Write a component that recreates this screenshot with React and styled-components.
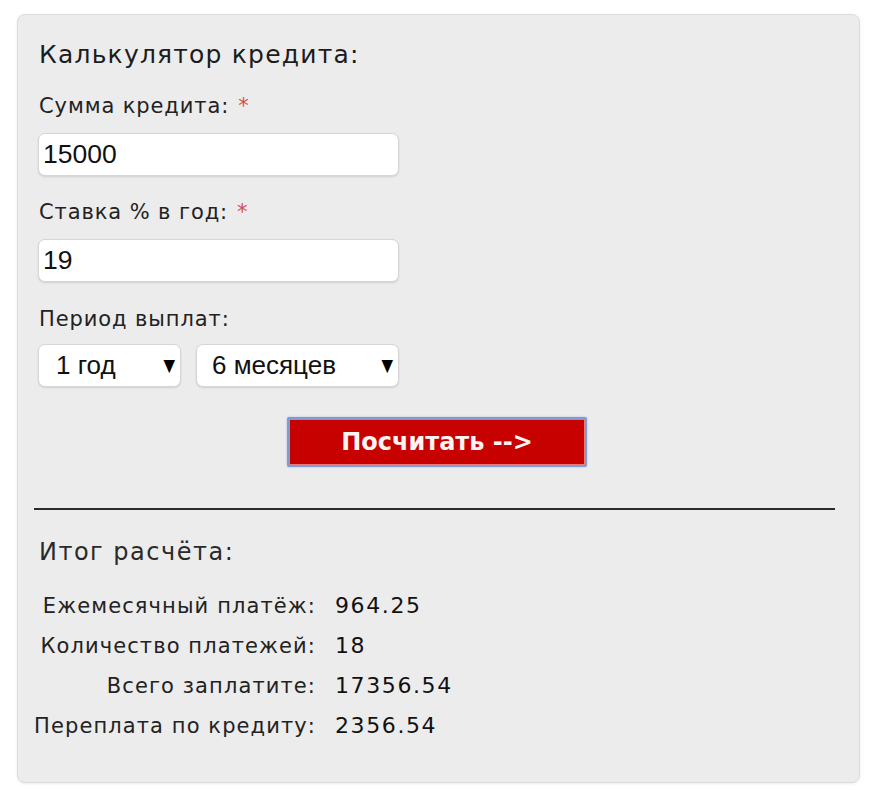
import React from "react";
import styled, { createGlobalStyle } from "styled-components";

const Global = createGlobalStyle`
  html, body { margin: 0; padding: 0; background: #ffffff; }
  body { font-family: "DejaVu Sans", Verdana, sans-serif; color: #1a1a1a; }
`;

const Page = styled.div`
  padding: 14px 16px 16px 17px;
`;

const Panel = styled.div`
  width: 843px;
  box-sizing: border-box;
  background: #ececec;
  border: 1px solid #dcdcdc;
  border-radius: 8px;
  box-shadow: 0 1px 3px rgba(0, 0, 0, 0.08);
  padding: 25px 24px 36px 21px;
`;

const Title = styled.div`
  font-size: 25px;
  line-height: 30px;
  letter-spacing: 1.2px;
  color: #1c1c1c;
`;

const Label = styled.div`
  font-size: 21px;
  line-height: 26px;
  letter-spacing: 0.9px;
  color: #222;
  margin-top: ${(p) => p.$top}px;
`;

const Star = styled.span`
  color: #d84a4a;
  margin-left: 9px;
`;

const Input = styled.input`
  display: block;
  box-sizing: border-box;
  width: 361px;
  height: 43px;
  margin-top: 14px;
  margin-left: -1px;
  padding: 0 4px;
  border: 1px solid #d6d6d6;
  border-radius: 7px;
  background: #fff;
  box-shadow: 0 1px 2px rgba(0, 0, 0, 0.12);
  font-family: "Liberation Sans", Arial, sans-serif;
  font-size: 26.5px;
  color: #111;
  outline: none;
`;

const SelectRow = styled.div`
  display: flex;
  gap: 15px;
  margin-top: 12px;
  margin-left: -1px;
`;

const SelectBox = styled.div`
  box-sizing: border-box;
  width: ${(p) => p.$w}px;
  height: 43px;
  display: flex;
  align-items: center;
  justify-content: space-between;
  padding: 0 ${(p) => p.$pr}px 0 ${(p) => p.$pl}px;
  background: #fff;
  border: 1px solid #d6d6d6;
  border-radius: 7px;
  box-shadow: 0 1px 2px rgba(0, 0, 0, 0.12);
  font-family: "Liberation Sans", Arial, sans-serif;
  font-size: 26px;
  color: #111;
`;

const Arrow = styled.span`
  font-family: "DejaVu Sans", sans-serif;
  font-size: 15px;
  color: #000;
  line-height: 1;
  transform: scaleY(1.15);
`;

const ButtonRow = styled.div`
  display: flex;
  justify-content: center;
  margin-top: 30px;
`;

const Button = styled.button`
  box-sizing: border-box;
  width: 300px;
  height: 50px;
  background: #c70000;
  border: 2px solid #7f9bd3;
  box-shadow: inset 0 0 0 1px #e77b7b, 0 0 2px rgba(100, 140, 220, 0.5);
  border-radius: 2px;
  color: #fff4f4;
  font-family: "DejaVu Sans", Verdana, sans-serif;
  font-weight: bold;
  font-size: 24px;
  cursor: pointer;
`;

const Divider = styled.hr`
  margin: 41px 0 0 -5px;
  border: none;
  height: 2px;
  background: #2a2a2a;
`;

const ResultTitle = styled.div`
  font-size: 24px;
  line-height: 30px;
  letter-spacing: 1.5px;
  color: #2a2a2a;
  margin-top: 27px;
`;

const Results = styled.div`
  display: grid;
  grid-template-columns: 282px auto;
  column-gap: 19px;
  margin: 19px 0 0 -5px;
`;

const RLabel = styled.div`
  text-align: right;
  font-size: 21px;
  line-height: 40px;
  letter-spacing: 1.1px;
  color: #222;
  white-space: nowrap;
`;

const RValue = styled.div`
  font-size: 22px;
  line-height: 40px;
  letter-spacing: 1.6px;
  color: #111;
`;

const rows = [
  ["Ежемесячный платёж:", "964.25"],
  ["Количество платежей:", "18"],
  ["Всего заплатите:", "17356.54"],
  ["Переплата по кредиту:", "2356.54"],
];

export default function App() {
  return (
    <>
      <Global />
      <Page>
        <Panel>
          <Title>Калькулятор кредита:</Title>
          <Label $top={23}>
            Сумма кредита:<Star>*</Star>
          </Label>
          <Input defaultValue="15000" />
          <Label $top={23}>
            Ставка % в год:<Star>*</Star>
          </Label>
          <Input defaultValue="19" />
          <Label $top={24}>Период выплат:</Label>
          <SelectRow>
            <SelectBox $w={143} $pl={17} $pr={5}>
              <span>1 год</span>
              <Arrow>▼</Arrow>
            </SelectBox>
            <SelectBox $w={203} $pl={15} $pr={5}>
              <span>6 месяцев</span>
              <Arrow>▼</Arrow>
            </SelectBox>
          </SelectRow>
          <ButtonRow>
            <Button>Посчитать --&gt;</Button>
          </ButtonRow>
          <Divider />
          <ResultTitle>Итог расчёта:</ResultTitle>
          <Results>
            {rows.map(([l, v]) => (
              <React.Fragment key={l}>
                <RLabel>{l}</RLabel>
                <RValue>{v}</RValue>
              </React.Fragment>
            ))}
          </Results>
        </Panel>
      </Page>
    </>
  );
}
